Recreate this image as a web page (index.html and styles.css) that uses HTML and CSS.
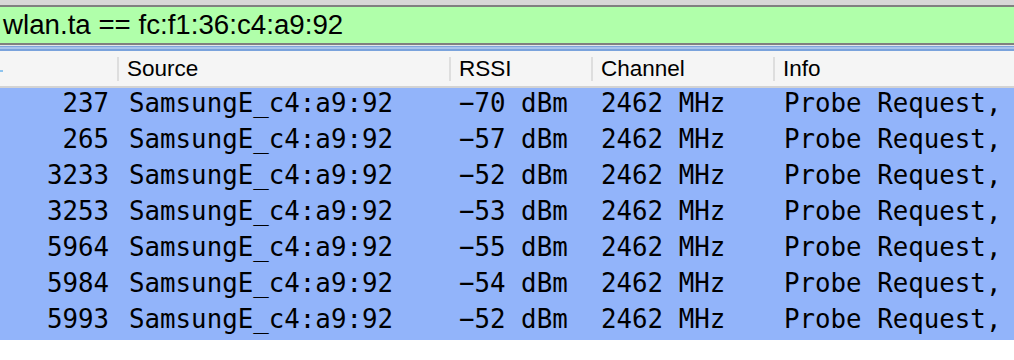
FILE: index.html
```html
<!DOCTYPE html>
<html lang="en">
<head>
  <meta charset="UTF-8">
  <title>Packet list</title>
  <link rel="stylesheet" href="styles.css">
</head>
<body>
  <div class="toolbar-edge"></div>
  <div class="filter-bar">wlan.ta == fc:f1:36:c4:a9:92</div>
  <div class="split"></div>
  <div class="packet-list">
    <div class="header">
      <div class="hcell first"><span class="sort-mark"></span></div>
      <div class="hcell">Source</div>
      <div class="hcell">RSSI</div>
      <div class="hcell">Channel</div>
      <div class="hcell">Info</div>
    </div>
    <div class="row"><span class="num">237</span><span>SamsungE_c4:a9:92</span><span>−70 dBm</span><span>2462 MHz</span><span>Probe Request,</span></div>
    <div class="row"><span class="num">265</span><span>SamsungE_c4:a9:92</span><span>−57 dBm</span><span>2462 MHz</span><span>Probe Request,</span></div>
    <div class="row"><span class="num">3233</span><span>SamsungE_c4:a9:92</span><span>−52 dBm</span><span>2462 MHz</span><span>Probe Request,</span></div>
    <div class="row"><span class="num">3253</span><span>SamsungE_c4:a9:92</span><span>−53 dBm</span><span>2462 MHz</span><span>Probe Request,</span></div>
    <div class="row"><span class="num">5964</span><span>SamsungE_c4:a9:92</span><span>−55 dBm</span><span>2462 MHz</span><span>Probe Request,</span></div>
    <div class="row"><span class="num">5984</span><span>SamsungE_c4:a9:92</span><span>−54 dBm</span><span>2462 MHz</span><span>Probe Request,</span></div>
    <div class="row"><span class="num">5993</span><span>SamsungE_c4:a9:92</span><span>−52 dBm</span><span>2462 MHz</span><span>Probe Request,</span></div>
  </div>
</body>
</html>
```

FILE: styles.css
```css
body {
  margin: 0;
  padding: 0;
  background-color: #ffffff;
  font-family: 'Liberation Sans', Arial, sans-serif;
  color: #000;
  overflow: hidden;
}
.toolbar-edge {
  height: 5px;
  background-color: #d7d7d7;
}
.filter-bar {
  height: 36px;
  line-height: 36px;
  padding-left: 3px;
  font-size: 27.7px;
  background-color: #b0ffaa;
  border-top: 2px solid #808080;
  border-bottom: 2px solid #808080;
  white-space: nowrap;
}
.split {
  height: 2px;
  background-color: #e3e6ea;
  border-bottom: 2px solid #a9c4ea;
  box-shadow: inset 0 -1px 0 #7ea6dc;
}
.packet-list {
  border-top: 2px solid #7aa3dc;
}
.header {
  display: grid;
  grid-template-columns: 117px 332px 142px 182px 1fr;
  align-items: center;
  height: 35px;
  background-color: #f5f5f5;
  border-bottom: 2px solid #d3d3d3;
}
.hcell {
  height: 24px;
  line-height: 24px;
  padding-left: 8px;
  font-size: 22.5px;
  border-left: 2px solid #dedede;
  white-space: nowrap;
}
.hcell.first {
  border-left: none;
  padding-left: 0;
  position: relative;
}
.sort-mark {
  position: absolute;
  left: 0;
  top: 13px;
  width: 3px;
  height: 2px;
  background-color: #8fc4ee;
}
.row {
  display: grid;
  grid-template-columns: 109px 330px 142px 183px 1fr;
  height: 30px;
  line-height: 30px;
  padding-bottom: 6px;
  background-color: #92b4fa;
  font-family: 'DejaVu Sans Mono', 'Liberation Mono', monospace;
  font-size: 25.8px;
  white-space: nowrap;
}
.row span {
  padding-left: 20px;
  overflow: hidden;
}
.row .num {
  padding-left: 0;
  text-align: right;
}
```
